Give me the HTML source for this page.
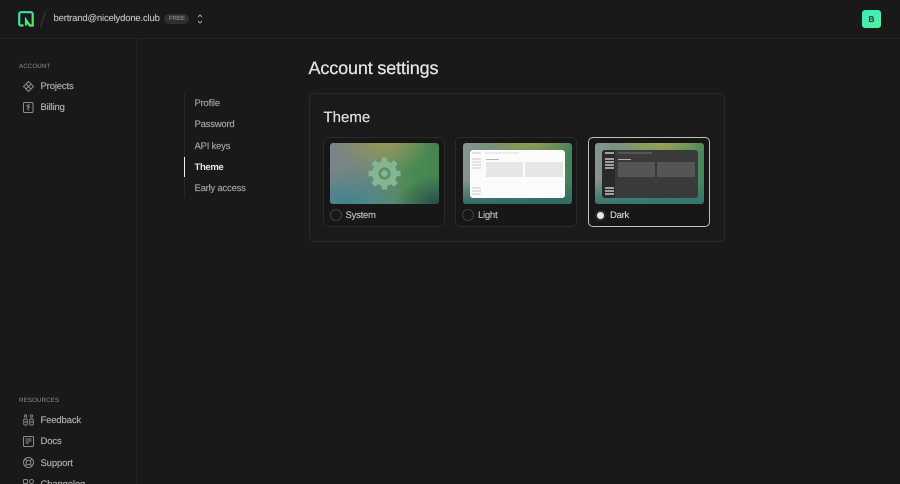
<!DOCTYPE html>
<html><head><meta charset="utf-8"><style>
html,body{margin:0;padding:0;width:900px;height:484px;overflow:hidden;background:#191919}
body{position:relative;font-family:"Liberation Sans",sans-serif;color:#d4d4d4;text-rendering:geometricPrecision}
.a{position:absolute}
.t{position:absolute;white-space:nowrap;line-height:14px}
.n{font-size:9.5px;color:#b0b0b0;letter-spacing:-.15px;-webkit-text-stroke:.15px #b0b0b0}
.s{font-size:9.5px;color:#a4a4a4;letter-spacing:-.22px;-webkit-text-stroke:.15px #a4a4a4}
.h{font-size:6.2px;color:#8e8e8e;letter-spacing:.1px}
.l{font-size:9.5px;letter-spacing:-.25px;-webkit-text-stroke:.12px currentColor}
.card{position:absolute;top:137px;width:120px;height:88px;border:1px solid #2a2a2a;border-radius:5px;background:#171717;box-sizing:content-box}
.prev{position:absolute;top:143px;width:109px;height:61px;border-radius:3px;overflow:hidden}
.radio{position:absolute;top:209px;width:10px;height:10px;border:1px solid #3e3e3e;border-radius:50%}
.ll{position:absolute;width:9px;height:2px}
svg{position:absolute;overflow:visible}
</style></head><body>
<div class="a" style="left:0;top:38px;width:900px;height:1px;background:#232323"></div>
<div class="a" style="left:136px;top:39px;width:1px;height:445px;background:#232323"></div>

<svg style="left:18px;top:11px" width="16" height="16" viewBox="0 0 16 16" fill="none"><defs><linearGradient id="g" x1="0" y1="0" x2="1" y2="1"><stop offset="0" stop-color="#2fe0c0"/><stop offset="1" stop-color="#4ff05a"/></linearGradient></defs><path d="M5.5 14.5H3A1.8 1.8 0 0 1 1.2 12.7V3A1.8 1.8 0 0 1 3 1.2H12.9A1.8 1.8 0 0 1 14.7 3V14.5H11.8L8 9V14.5" stroke="url(#g)" stroke-width="2.2"/></svg>
<svg style="left:40px;top:11px" width="6" height="17" fill="none"><path d="M5.5 .5L.5 16.5" stroke="#3c3c3c"/></svg>
<div class="t" style="left:53.5px;top:12px;font-size:9.5px;color:#c0c0c0;letter-spacing:-.18px;-webkit-text-stroke:.12px #c0c0c0">bertrand@nicelydone.club</div>
<div class="a" style="left:164px;top:14px;width:25px;height:10px;border-radius:5px;background:#2e2e2e"></div>
<div class="t" style="left:169px;top:12px;font-size:6px;color:#a2a2a2">FREE</div>
<svg style="left:196px;top:14px" width="8" height="10" fill="none" stroke="#a8a8a8" stroke-width=".9"><path d="M2 3L4 1L6 3M2 7L4 9L6 7"/></svg>
<div class="a" style="left:862px;top:10px;width:19px;height:18px;border-radius:3px;background:linear-gradient(135deg,#3be8bc,#52f2a0)"></div>
<div class="t" style="left:862px;top:12px;width:19px;text-align:center;font-size:8.5px;font-weight:700;color:#14432f">B</div>

<div class="t h" style="left:19px;top:59.5px">ACCOUNT</div>
<svg style="left:23px;top:81px" width="11" height="11" fill="none" stroke="#8c8c8c" stroke-width="1"><path d="M5.5.5L8 3 5.5 5.5 3 3ZM2.8 3.2L.5 5.5 3 8 5.5 5.5 8 8 10.5 5.5 8.2 3.2M3 8L5.5 10.5 8 8"/></svg>
<div class="t n" style="left:40.5px;top:79.5px">Projects</div>
<svg style="left:23px;top:102px" width="11" height="11" fill="none" stroke="#8c8c8c" stroke-width="1"><rect x=".5" y=".5" width="9.5" height="10" rx="1"/><path d="M6.5 2.5L4 3.8 6.5 5 4 6.5M5.2 6.5V8.5"/></svg>
<div class="t n" style="left:40.5px;top:100.5px">Billing</div>

<div class="t h" style="left:19px;top:393.5px">RESOURCES</div>
<svg style="left:23px;top:414px" width="11" height="12" fill="none" stroke="#8c8c8c" stroke-width=".9"><circle cx="2.5" cy="2" r="1.2"/><circle cx="8.5" cy="2" r="1.2"/><rect x=".7" y="5" width="3.6" height="6" rx="1"/><rect x="6.7" y="5" width="3.6" height="6" rx="1"/><path d="M.7 8H4.3M6.7 8H10.3"/></svg>
<div class="t n" style="left:40.5px;top:413.5px">Feedback</div>
<svg style="left:23px;top:436px" width="11" height="11" fill="none" stroke="#8c8c8c" stroke-width="1"><rect x=".5" y=".5" width="10" height="10" rx="1"/><path d="M2.5 3H8.5M2.5 5H8.5M2.5 7H6"/></svg>
<div class="t n" style="left:40.5px;top:434.5px">Docs</div>
<svg style="left:23px;top:457px" width="11" height="11" fill="none" stroke="#8c8c8c" stroke-width="1"><circle cx="5.5" cy="5.5" r="5"/><circle cx="5.5" cy="5.5" r="2.3"/><path d="M2 2L3.8 3.8M9 2L7.2 3.8M2 9L3.8 7.2M9 9L7.2 7.2"/></svg>
<div class="t n" style="left:40.5px;top:456.5px">Support</div>
<svg style="left:23px;top:479px" width="11" height="11" fill="none" stroke="#8c8c8c" stroke-width="1"><rect x=".5" y=".5" width="4" height="4" rx="1"/><circle cx="8.5" cy="2.5" r="2"/></svg>
<div class="t n" style="left:40.5px;top:478px">Changelog</div>

<div class="a" style="left:184px;top:93px;width:1px;height:105px;background:#272727"></div>
<div class="a" style="left:184px;top:157px;width:1px;height:20px;background:#f0f0f0"></div>
<div class="t s" style="left:194.5px;top:96.5px">Profile</div>
<div class="t s" style="left:194.5px;top:118px">Password</div>
<div class="t s" style="left:194.5px;top:139.5px">API keys</div>
<div class="t s" style="left:194.5px;top:161px;color:#e4e4e4;font-weight:700;letter-spacing:-.35px;-webkit-text-stroke:0">Theme</div>
<div class="t s" style="left:194.5px;top:182px">Early access</div>

<div class="t" style="left:308.5px;top:57px;line-height:22px;font-size:18px;color:#e4e4e4;letter-spacing:-.14px;-webkit-text-stroke:.25px #e4e4e4">Account settings</div>
<div class="a" style="left:309px;top:93px;width:414px;height:147px;border:1px solid #2a2a2a;border-radius:5px;background:#1a1a1a"></div>
<div class="t" style="left:323.5px;top:107.5px;line-height:20px;font-size:15px;color:#e0e0e0;-webkit-text-stroke:.2px #e0e0e0">Theme</div>

<div class="card" style="left:323px"></div>
<div class="card" style="left:455px"></div>
<div class="card" style="left:588px;border-color:#c0c0c0"></div>

<div class="prev" style="left:330px;background:radial-gradient(ellipse 45% 55% at 50% -5%,#9c9858 0,rgba(156,152,88,0) 100%),linear-gradient(90deg,#7f8388 0,#6d8878 40%,#4c8a54 75%,#44824f 100%)"><div style="position:absolute;inset:0;background:radial-gradient(ellipse 55% 60% at 15% 100%,#3f8490 0,rgba(63,132,144,0) 100%),radial-gradient(ellipse 40% 45% at 100% 100%,#284c50 0,rgba(40,76,80,0) 100%)"></div></div>
<svg style="left:368px;top:157px" width="33" height="33" viewBox="-16.5 -16.5 33 33" fill="none"><circle r="9" stroke="#84b691" stroke-width="7"/><path d="M0-16V-10M0 16V10M-16 0H-10M16 0H10M-11.3-11.3L-7-7M11.3 11.3L7 7M11.3-11.3L7-7M-11.3 11.3L-7 7" stroke="#84b691" stroke-width="5.5"/><circle r="5" stroke="#5b8f69" stroke-width="2.2"/><circle r="3.4" fill="#84b691"/></svg>

<div class="prev" style="left:463px;background:radial-gradient(ellipse 45% 40% at 60% -5%,#9c9c4c 0,rgba(156,156,76,0) 100%),linear-gradient(90deg,#87958f 0,#5a8a70 50%,#43805a 100%)"><div style="position:absolute;inset:0;background:linear-gradient(0deg,#2f6a64 0,rgba(47,106,100,0) 40%)"></div></div>
<div class="a" style="left:470px;top:150px;width:95px;height:48px;border-radius:3px;background:#fbfbfb"></div>
<div class="a" style="left:485px;top:152px;width:34px;height:2px;background:#ececec"></div>
<div class="ll" style="left:472px;top:152px;background:#e2e2e2"></div>
<div class="ll" style="left:472px;top:158px;background:#e2e2e2"></div>
<div class="ll" style="left:472px;top:161px;background:#e2e2e2"></div>
<div class="ll" style="left:472px;top:164px;background:#e2e2e2"></div>
<div class="ll" style="left:472px;top:167px;background:#e2e2e2"></div>
<div class="ll" style="left:472px;top:187px;background:#e2e2e2"></div>
<div class="ll" style="left:472px;top:190px;background:#e2e2e2"></div>
<div class="ll" style="left:472px;top:193px;background:#e2e2e2"></div>
<div class="a" style="left:486px;top:158.5px;width:13px;height:1.5px;background:#b4b4b4"></div>
<div class="a" style="left:486px;top:162px;width:37px;height:15px;background:#e6e6e6"></div>
<div class="a" style="left:525px;top:162px;width:38px;height:15px;background:#e6e6e6"></div>

<div class="prev" style="left:595px;background:radial-gradient(ellipse 45% 40% at 60% -5%,#a5a54e 0,rgba(165,165,78,0) 100%),linear-gradient(90deg,#87958f 0,#5e8d72 50%,#47885a 100%)"><div style="position:absolute;inset:0;background:linear-gradient(0deg,#33756e 0,rgba(51,117,110,0) 40%)"></div></div>
<div class="a" style="left:602px;top:150px;width:96px;height:48px;border-radius:3px;background:#3a3a3a"></div>
<div class="a" style="left:602px;top:150px;width:13px;height:48px;border-radius:3px 0 0 3px;background:#2a2a2a"></div>
<div class="ll" style="left:605px;top:152px;background:#a0a0a0"></div>
<div class="ll" style="left:605px;top:158px;background:#a0a0a0"></div>
<div class="ll" style="left:605px;top:161px;background:#a0a0a0"></div>
<div class="ll" style="left:605px;top:164px;background:#a0a0a0"></div>
<div class="ll" style="left:605px;top:167px;background:#a0a0a0"></div>
<div class="ll" style="left:605px;top:187px;background:#a0a0a0"></div>
<div class="ll" style="left:605px;top:190px;background:#a0a0a0"></div>
<div class="ll" style="left:605px;top:193px;background:#a0a0a0"></div>
<div class="a" style="left:618px;top:152px;width:34px;height:2px;background:#555"></div>
<div class="a" style="left:618px;top:158.5px;width:13px;height:1.5px;background:#b0b0b0"></div>
<div class="a" style="left:618px;top:162px;width:37px;height:15px;background:#555"></div>
<div class="a" style="left:657px;top:162px;width:38px;height:15px;background:#555"></div>

<div class="radio" style="left:330px"></div>
<div class="radio" style="left:462px"></div>
<div class="a" style="left:596.5px;top:211.5px;width:7px;height:7px;border-radius:50%;background:#e8e8e8;box-shadow:0 0 0 2px #2c2c2c"></div>
<div class="t l" style="left:345.5px;top:208.5px;color:#c4c4c4">System</div>
<div class="t l" style="left:478px;top:208.5px;color:#c4c4c4">Light</div>
<div class="t l" style="left:610px;top:208.5px;color:#d4d4d4">Dark</div>
</body></html>
